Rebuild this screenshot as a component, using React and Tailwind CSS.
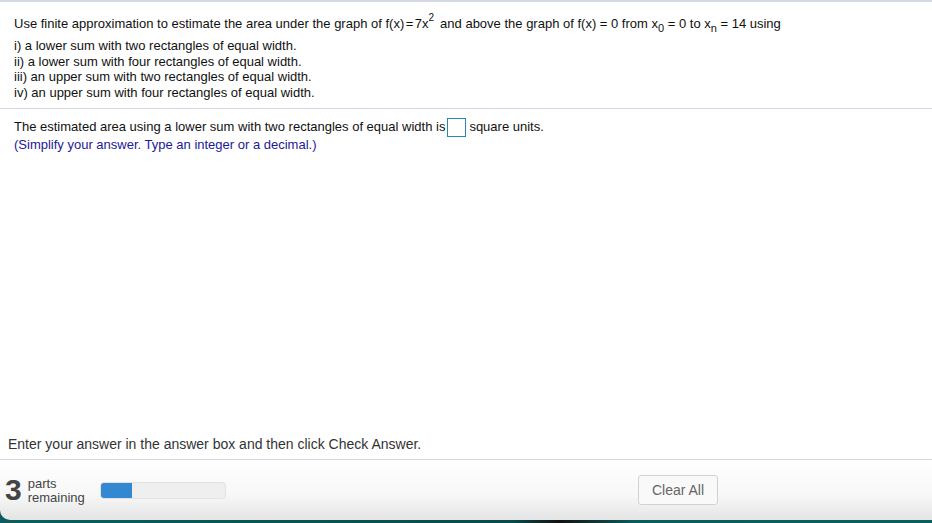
export default function App() {
  return (
    <div className="w-[932px] h-[523px] overflow-hidden bg-white flex flex-col relative" style={{ fontFamily: '"Liberation Sans", Arial, sans-serif' }}>
      <div className="h-[2px] bg-[#d3d9e6] shrink-0" />
      <div className="px-[14px] pt-[12px] pb-[7px] text-[13px] text-[#111] leading-[15.7px]">
        <div className="h-[18px] flex items-end">
          <span>
            Use finite approximation to estimate the area under the graph of f(x)<span className="mx-[1.5px]">=</span>7x
            <sup className="text-[10px] -top-[7px]">2</sup>
            <span className="ml-[6px]">and above the graph of f(x) = 0 from x</span>
            <sub className="text-[11px] -bottom-[4px]">0</sub> = 0 to x<sub className="text-[11px] -bottom-[4px]">n</sub> = 14 using
          </span>
        </div>
        <div className="mt-[6px]">i) a lower sum with two rectangles of equal width.</div>
        <div>ii) a lower sum with four rectangles of equal width.</div>
        <div>iii) an upper sum with two rectangles of equal width.</div>
        <div>iv) an upper sum with four rectangles of equal width.</div>
      </div>
      <div className="h-px bg-[#d3d9e6] shrink-0" />
      <div className="px-[14px] pt-[9px] text-[13px] text-[#111] leading-[16px] flex-1">
        <div className="flex items-center">
          <span>The estimated area using a lower sum with two rectangles of equal width is</span>
          <span className="inline-block w-[19px] h-[19px] border border-[#2a86ab] ml-[2px] mr-[3px]" />
          <span>square units.</span>
        </div>
        <div className="text-[#1c1896]">(Simplify your answer. Type an integer or a decimal.)</div>
      </div>
      <div className="px-[8px] pb-[4px] text-[14px] text-[#333]">Enter your answer in the answer box and then click Check Answer.</div>
      <div className="h-px bg-[#d3d9e6] shrink-0" />
      <div className="relative h-[63px] shrink-0 bg-[#0b5c5e]">
        <div className="absolute inset-x-0 bottom-0 h-[3px] bg-[linear-gradient(90deg,#0c5e5e_0%,#0a4a4a_55%,#111_60%,#0b5b5c_68%,#0c5e5e_100%)]" />
        <div className="h-[60px] rounded-bl-[10px] bg-[linear-gradient(180deg,#ffffff_0%,#f7f7f7_60%,#e4e4e4_100%)] flex items-center pl-[5px] pr-[214px]">
          <span className="text-[30px] font-bold text-[#444] leading-none">3</span>
          <div className="ml-[6px] text-[13px] text-[#444] leading-[14px] mt-[2px]">
            <div>parts</div>
            <div>remaining</div>
          </div>
          <div className="ml-[15px] w-[126px] h-[17px] rounded-[4px] bg-[#efefef] border border-[#e2e2e2] overflow-hidden">
            <div className="h-full w-[31px] bg-[#3487d1]" />
          </div>
          <div className="flex-1" />
          <button className="w-[80px] h-[30px] border border-[#d2d2d2] rounded-[3px] bg-[#f9f9f9] text-[14px] text-[#666]">Clear All</button>
        </div>
      </div>
    </div>
  );
}
